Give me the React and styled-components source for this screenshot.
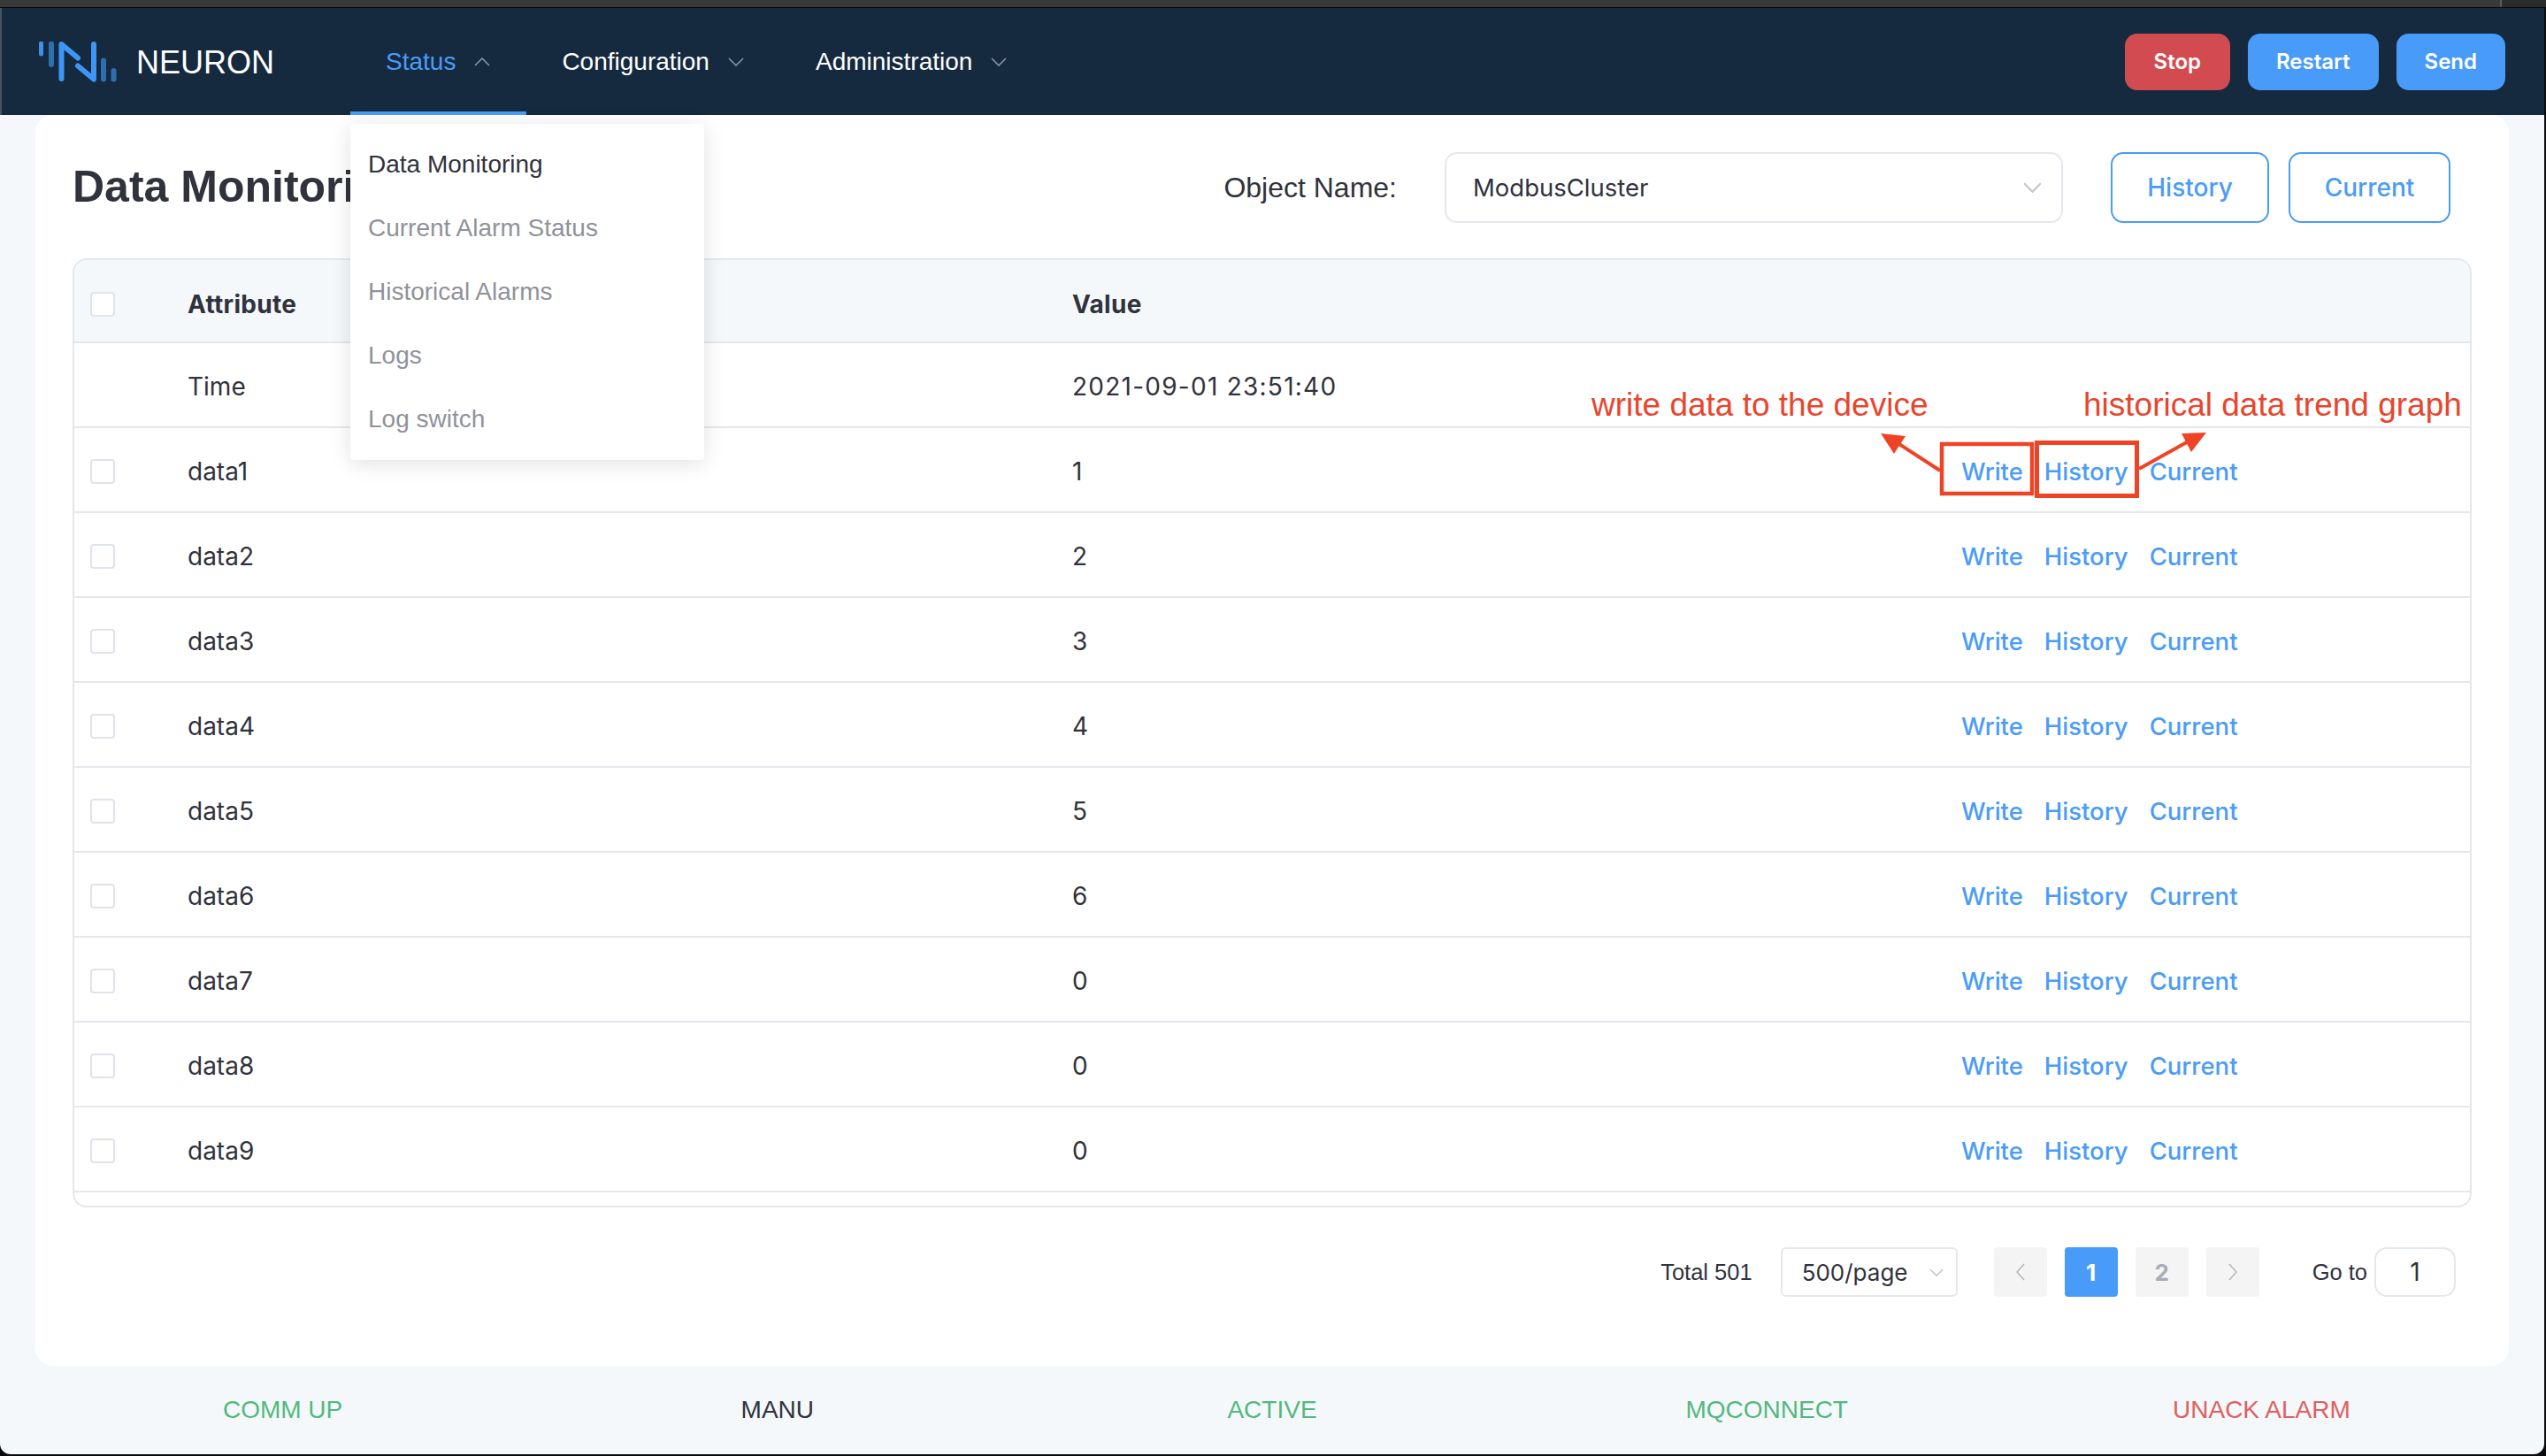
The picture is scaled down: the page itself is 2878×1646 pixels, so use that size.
import React from 'react';
import styled, { createGlobalStyle } from 'styled-components';

const GlobalStyle = createGlobalStyle`
  html, body {
    margin: 0;
    padding: 0;
    background: #000;
  }
  * {
    box-sizing: border-box;
  }
`;

const Screen = styled.div`
  width: 2878px;
  height: 1646px;
  display: flex;
  flex-direction: column;
  background: #0b0b0d;
  font-family: Inter, "Liberation Sans", sans-serif;
  color: #30323c;
  overflow: hidden;
`;

const TitleStrip = styled.div`
  height: 9px;
  flex: none;
  display: flex;
  justify-content: flex-end;
  background: #393939;
  border-bottom: 1px solid #0a0a0a;
`;

const StripEnd = styled.div`
  width: 52px;
  background: #2b2b2b;
  border-left: 2px solid #5a5a5a;
`;

const AppWindow = styled.div`
  flex: none;
  height: 1635px;
  margin-right: 2px;
  display: flex;
  flex-direction: column;
  background: #f5f8fb;
  border-radius: 0 0 12px 12px;
  overflow: hidden;
`;

const Header = styled.header`
  flex: none;
  height: 121px;
  display: flex;
  align-items: center;
  padding: 0 44px 0 42px;
  background: #15293f;
  border-left: 2px solid #46525f;
`;

const Brand = styled.div`
  width: 352px;
  flex: none;
  display: flex;
  align-items: center;
  gap: 20px;
  color: #fff;
  font-family: "Liberation Sans", Arial, sans-serif;
  font-size: 36px;
  line-height: 48px;
`;

const BrandName = styled.span`
  padding-top: 2px;
`;

const Nav = styled.nav`
  height: 100%;
  flex: 1;
  display: flex;
`;

const NavItem = styled.div`
  position: relative;
  display: flex;
  align-items: center;
  gap: 21px;
  padding: 4px 41px 0 40px;
  font-family: "Liberation Sans", Arial, sans-serif;
  font-size: 28px;
  color: ${(p) => (p.$active ? '#4a9cf7' : '#fff')};
  border-bottom: 4px solid ${(p) => (p.$active ? '#4a9cf7' : 'transparent')};
`;

const Caret = styled.svg`
  width: ${(p) => p.$w || 18}px;
  height: ${(p) => p.$h || 10}px;
  flex: none;
  fill: none;
  stroke: ${(p) => p.$color || '#8796a6'};
  stroke-width: 1.6;
`;

const Dropdown = styled.div`
  position: absolute;
  top: 131px;
  left: 0;
  z-index: 5;
  width: 400px;
  height: 380px;
  padding: 10px 0;
  background: #fff;
  border-radius: 4px;
  box-shadow: 0 4px 24px rgba(0, 0, 0, 0.12);
`;

const DropdownItem = styled.div`
  height: 72px;
  display: flex;
  align-items: center;
  padding-left: 20px;
  font-size: 28px;
  color: ${(p) => (p.$current ? '#30323c' : '#8f9299')};
`;

const Actions = styled.div`
  display: flex;
  gap: 20px;
`;

const HeaderButton = styled.button`
  height: 64px;
  padding: 0 ${(p) => (p.$danger ? 33 : 32)}px;
  border: 0;
  border-radius: 14px;
  background: ${(p) => (p.$danger ? '#d24b50' : '#489bf8')};
  color: #fff;
  font-family: Inter, sans-serif;
  font-size: 24px;
  font-weight: 600;
`;

const Main = styled.main`
  flex: none;
  height: 1414px;
  margin: 0 40px;
  padding: 42px 42px 0;
  background: #fff;
  border-radius: 20px;
`;

const Toolbar = styled.div`
  height: 80px;
  display: flex;
  align-items: center;
  padding-right: 24px;
`;

const PageTitle = styled.h1`
  margin: 0 auto 2px 0;
  font-family: "Liberation Sans", Arial, sans-serif;
  font-size: 50px;
  font-weight: 700;
  color: #30323c;
`;

const FieldLabel = styled.label`
  margin-right: 54px;
  font-family: "Liberation Sans", Arial, sans-serif;
  font-size: 32px;
`;

const ObjectSelect = styled.div`
  width: 699px;
  height: 80px;
  display: flex;
  align-items: center;
  justify-content: space-between;
  margin-right: 54px;
  padding: 0 22px 0 30px;
  border: 2px solid #e4e7ec;
  border-radius: 14px;
  font-size: 27.5px;
`;

const OutlineButton = styled.button`
  width: ${(p) => p.$w}px;
  height: 80px;
  margin-left: ${(p) => p.$gap || 0}px;
  background: #fff;
  border: 2px solid #4a9cf7;
  border-radius: 14px;
  color: #4a9cf7;
  font-family: Inter, sans-serif;
  font-size: 28px;
  font-weight: 500;
`;

const TableFrame = styled.div`
  position: relative;
  height: 1073px;
  margin-top: 40px;
  border: 2px solid #e4e7ec;
  border-radius: 16px;
`;

const Row = styled.div`
  height: ${(p) => (p.$head ? 94 : 96)}px;
  display: grid;
  grid-template-columns: 128px 1000px 1005px 1fr;
  align-items: center;
  padding-top: ${(p) => (p.$head ? 7 : 3)}px;
  font-size: 28px;
  font-weight: ${(p) => (p.$head ? 700 : 400)};
  letter-spacing: ${(p) => (p.$head ? 0.3 : 0)}px;
  background: ${(p) => (p.$head ? '#f5f8fb' : 'transparent')};
  border-bottom: 2px solid #e4e7ec;
  border-radius: ${(p) => (p.$head ? '14px 14px 0 0' : '0')};
`;

const CheckBox = styled.span`
  width: 28px;
  height: 28px;
  margin-left: 18px;
  background: #fff;
  border: 2px solid #dfe3ea;
  border-radius: 4px;
`;

const Timestamp = styled.span`
  letter-spacing: 1.25px;
`;

const RowLinks = styled.div`
  display: flex;
  gap: 24px;
`;

const RowLink = styled.a`
  color: #4a9cf7;
  font-size: 27.5px;
  font-weight: 500;
`;

const Note = styled.span`
  position: absolute;
  top: ${(p) => p.$top}px;
  left: ${(p) => p.$left}px;
  font-family: "Liberation Sans", Arial, sans-serif;
  font-size: 37px;
  line-height: 44px;
  color: #e8452e;
  white-space: nowrap;
`;

const Arrows = styled.svg`
  position: absolute;
  top: 0;
  left: 0;
  width: 100%;
  height: 100%;
  pointer-events: none;
  fill: none;
`;

const Pager = styled.div`
  height: 56px;
  display: flex;
  align-items: center;
  justify-content: flex-end;
  margin-top: 45px;
  padding-right: 18px;
  font-size: 26px;
`;

const PagerText = styled.span`
  margin-right: ${(p) => p.$gap}px;
  font-family: "Liberation Sans", Arial, sans-serif;
  font-size: 25.5px;
`;

const SizeSelect = styled.div`
  width: 200px;
  height: 56px;
  display: flex;
  align-items: center;
  justify-content: space-between;
  margin-right: 41px;
  padding: 0 14px 0 22px;
  border: 2px solid #e4e7ec;
  border-radius: 6px;
  font-size: 26px;
`;

const PageButton = styled.div`
  width: 60px;
  height: 56px;
  display: flex;
  align-items: center;
  justify-content: center;
  margin-right: ${(p) => p.$gap ?? 20}px;
  background: ${(p) => (p.$current ? '#489bf8' : '#f4f4f5')};
  border-radius: 4px;
  color: ${(p) => (p.$current ? '#fff' : '#a9acb6')};
  font-weight: 700;
`;

const GotoInput = styled.div`
  width: 92px;
  height: 56px;
  display: flex;
  align-items: center;
  justify-content: center;
  border: 2px solid #e4e7ec;
  border-radius: 14px;
  font-size: 28px;
`;

const Footer = styled.footer`
  flex: 1;
  display: grid;
  grid-template-columns: repeat(5, 1fr);
  align-items: center;
  margin: 0 40px;
`;

const FooterItem = styled.div`
  text-align: center;
  font-family: "Liberation Sans", Arial, sans-serif;
  font-size: 28px;
  color: ${(p) => p.$color};
`;

const Logo = () => (
  <svg width="90" height="46" viewBox="44 47 90 46" fill="none" strokeLinecap="round" aria-hidden="true">
    <path d="M46.5 49V61" stroke="#3d8fe8" strokeWidth="5" />
    <path d="M58 49.5V73" stroke="#2f6fb0" strokeWidth="6" />
    <path d="M69.5 89V50L88 65.5M88 74.5L106 89.5V50" stroke="#3d96f5" strokeWidth="6" strokeLinejoin="round" />
    <path d="M117 68.5V89.5" stroke="#2f6fb0" strokeWidth="6" />
    <path d="M128.5 80V89.5" stroke="#2f6fb0" strokeWidth="6" />
  </svg>
);

const Chevron = ({ up, w, h, color }) => (
  <Caret $w={w} $h={h} $color={color} viewBox="0 0 18 10" preserveAspectRatio="none">
    <polyline points={up ? '1,9 9,1 17,9' : '1,1 9,9 17,1'} />
  </Caret>
);

const alarmItems = ['Data Monitoring', 'Current Alarm Status', 'Historical Alarms', 'Logs', 'Log switch'];

const rows = [
  ['data1', '1'],
  ['data2', '2'],
  ['data3', '3'],
  ['data4', '4'],
  ['data5', '5'],
  ['data6', '6'],
  ['data7', '0'],
  ['data8', '0'],
  ['data9', '0'],
];

const statusItems = [
  ['COMM UP', '#53b87e'],
  ['MANU', '#30323c'],
  ['ACTIVE', '#53b87e'],
  ['MQCONNECT', '#53b87e'],
  ['UNACK ALARM', '#e06060'],
];

export default function App() {
  return (
    <>
      <GlobalStyle />
      <Screen>
        <TitleStrip>
          <StripEnd />
        </TitleStrip>
        <AppWindow>
          <Header>
            <Brand>
              <Logo />
              <BrandName>NEURON</BrandName>
            </Brand>
            <Nav>
              <NavItem $active>
                Status
                <Chevron up />
                <Dropdown>
                  {alarmItems.map((item, i) => (
                    <DropdownItem key={item} $current={i === 0}>
                      {item}
                    </DropdownItem>
                  ))}
                </Dropdown>
              </NavItem>
              <NavItem>
                Configuration
                <Chevron />
              </NavItem>
              <NavItem>
                Administration
                <Chevron />
              </NavItem>
            </Nav>
            <Actions>
              <HeaderButton $danger>Stop</HeaderButton>
              <HeaderButton>Restart</HeaderButton>
              <HeaderButton>Send</HeaderButton>
            </Actions>
          </Header>

          <Main>
            <Toolbar>
              <PageTitle>Data Monitoring</PageTitle>
              <FieldLabel>Object Name:</FieldLabel>
              <ObjectSelect>
                ModbusCluster
                <Chevron w={21} h={12} color="#bfc2c8" />
              </ObjectSelect>
              <OutlineButton $w={179}>History</OutlineButton>
              <OutlineButton $w={183} $gap={22}>
                Current
              </OutlineButton>
            </Toolbar>

            <TableFrame>
              <Row $head>
                <CheckBox />
                <span>Attribute</span>
                <span>Value</span>
              </Row>
              <Row>
                <span />
                <span>Time</span>
                <Timestamp>2021-09-01 23:51:40</Timestamp>
              </Row>
              {rows.map(([name, value]) => (
                <Row key={name}>
                  <CheckBox />
                  <span>{name}</span>
                  <span>{value}</span>
                  <RowLinks>
                    <RowLink>Write</RowLink>
                    <RowLink>History</RowLink>
                    <RowLink>Current</RowLink>
                  </RowLinks>
                </Row>
              ))}

              <Note $left={1715} $top={142}>
                write data to the device
              </Note>
              <Note $left={2271} $top={142}>
                historical data trend graph
              </Note>
              <Arrows>
                <rect x="2111" y="208" width="102" height="56" stroke="#ee4426" strokeWidth="4.5" />
                <rect x="2218.5" y="206.5" width="113" height="60" stroke="#ee4426" strokeWidth="5" />
                <path d="M2109 238L2052 201" stroke="#ee4426" strokeWidth="4" />
                <path d="M2042 196L2070 199L2057 219Z" fill="#ee4426" />
                <path d="M2334 236L2395 202" stroke="#ee4426" strokeWidth="4" />
                <path d="M2410 195L2382 196L2393 217Z" fill="#ee4426" />
              </Arrows>
            </TableFrame>

            <Pager>
              <PagerText $gap={32}>Total 501</PagerText>
              <SizeSelect>
                500/page
                <Chevron w={16} h={9} color="#bfc2c8" />
              </SizeSelect>
              <PageButton>
                <Caret $w={10} $h={20} $color="#b4b7bd" viewBox="0 0 10 20">
                  <polyline points="9,1 1,10 9,19" />
                </Caret>
              </PageButton>
              <PageButton $current>1</PageButton>
              <PageButton>2</PageButton>
              <PageButton $gap={60}>
                <Caret $w={10} $h={20} $color="#b4b7bd" viewBox="0 0 10 20">
                  <polyline points="1,1 9,10 1,19" />
                </Caret>
              </PageButton>
              <PagerText $gap={8}>Go to</PagerText>
              <GotoInput>1</GotoInput>
            </Pager>
          </Main>

          <Footer>
            {statusItems.map(([label, color]) => (
              <FooterItem key={label} $color={color}>
                {label}
              </FooterItem>
            ))}
          </Footer>
        </AppWindow>
      </Screen>
    </>
  );
}
